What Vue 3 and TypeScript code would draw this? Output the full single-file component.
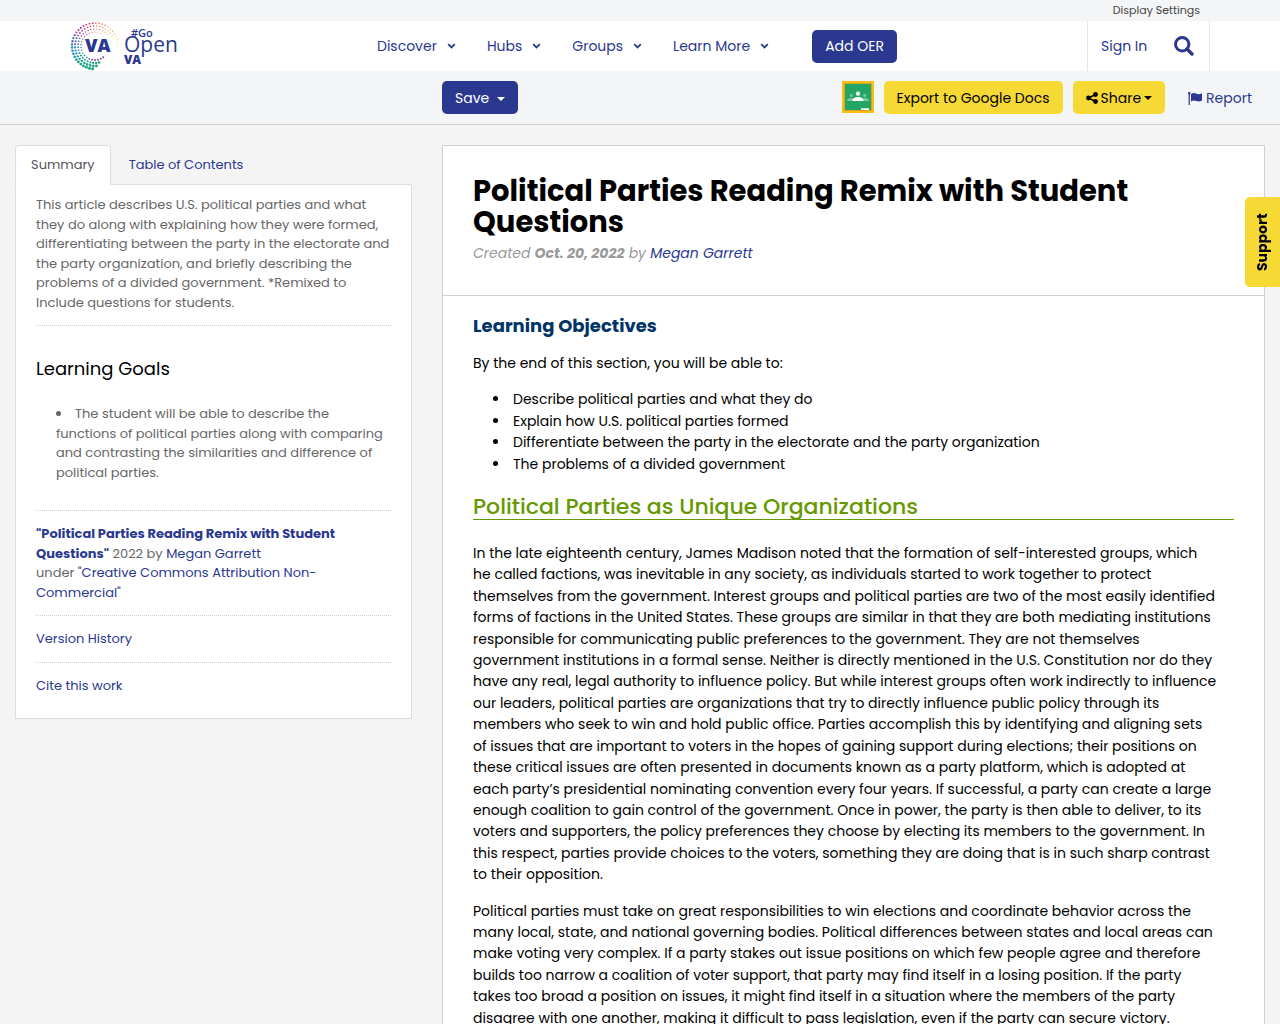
<script setup lang="ts">
interface Dot { x: number; y: number; r: number; fill: string }

const menus: string[] = ['Discover', 'Hubs', 'Groups', 'Learn More']

const summary = `This article describes U.S. political parties and what
they do along with explaining how they were formed,
differentiating between the party in the electorate and
the party organization, and briefly describing the
problems of a divided government. *Remixed to
Include questions for students.`

const goal = `The student will be able to describe the
functions of political parties along with comparing
and contrasting the similarities and difference of
political parties.`

const objectives: string[] = [
  'Describe political parties and what they do',
  'Explain how U.S. political parties formed',
  'Differentiate between the party in the electorate and the party organization',
  'The problems of a divided government',
]

const paragraphs: string[] = [
  `In the late eighteenth century, James Madison noted that the formation of self-interested groups, which
he called factions, was inevitable in any society, as individuals started to work together to protect
themselves from the government. Interest groups and political parties are two of the most easily identified
forms of factions in the United States. These groups are similar in that they are both mediating institutions
responsible for communicating public preferences to the government. They are not themselves
government institutions in a formal sense. Neither is directly mentioned in the U.S. Constitution nor do they
have any real, legal authority to influence policy. But while interest groups often work indirectly to influence
our leaders, political parties are organizations that try to directly influence public policy through its
members who seek to win and hold public office. Parties accomplish this by identifying and aligning sets
of issues that are important to voters in the hopes of gaining support during elections; their positions on
these critical issues are often presented in documents known as a party platform, which is adopted at
each party’s presidential nominating convention every four years. If successful, a party can create a large
enough coalition to gain control of the government. Once in power, the party is then able to deliver, to its
voters and supporters, the policy preferences they choose by electing its members to the government. In
this respect, parties provide choices to the voters, something they are doing that is in such sharp contrast
to their opposition.`,
  `Political parties must take on great responsibilities to win elections and coordinate behavior across the
many local, state, and national governing bodies. Political differences between states and local areas can
make voting very complex. If a party stakes out issue positions on which few people agree and therefore
builds too narrow a coalition of voter support, that party may find itself in a losing position. If the party
takes too broad a position on issues, it might find itself in a situation where the members of the party
disagree with one another, making it difficult to pass legislation, even if the party can secure victory.`,
]

const palette: string[] = ['#f6d23c', '#f3a83b', '#ea6a4a', '#d83a6c', '#a0409a', '#4f6bb0', '#2f90b8', '#22a39a', '#22a884', '#1f9f78']

// Four rings of dots, sweeping counter-clockwise from the right edge to the foot.
function ringDots(): Dot[] {
  const dots: Dot[] = []
  const rings = [
    { radius: 23, end: 270, step: 8 },
    { radius: 20, end: 280, step: 9 },
    { radius: 17, end: 292, step: 10 },
    { radius: 14, end: 308, step: 12 },
  ]
  rings.forEach((ring, i) => {
    for (let a = i * 22; a <= ring.end; a += ring.step) {
      const t = a / 300
      const rad = (a * Math.PI) / 180
      dots.push({
        x: 25 + ring.radius * Math.cos(rad),
        y: 25 - ring.radius * Math.sin(rad),
        r: (0.5 + t * 1.2) * (1 - i * 0.13),
        fill: i === 3 && a > 240 ? '#7a4a9c' : palette[Math.min(9, Math.floor(t * 10))],
      })
    }
  })
  return dots
}
const dots = ringDots()
</script>

<template>
  <div class="page">
    <div class="settings"><a href="#">Display Settings</a></div>

    <header class="header">
      <a class="logo" href="#" aria-label="Go Open VA">
        <svg width="108" height="50" viewBox="0 0 108 50">
          <circle v-for="(d, i) in dots" :key="i" :cx="d.x" :cy="d.y" :r="d.r" :fill="d.fill" />
          <text x="15" y="31" class="mark">VA</text>
          <text x="61" y="16" class="go">#Go</text>
          <text x="54" y="31" class="open">Open</text>
          <text x="54" y="43" class="state">VA</text>
        </svg>
      </a>
      <nav class="nav">
        <a v-for="m in menus" :key="m" href="#">{{ m }}
          <svg width="9" height="6" viewBox="0 0 9 6"><path d="M1.200 1.200 4.500 4.500 7.800 1.200" fill="none" stroke="currentColor" stroke-width="1.800" /></svg>
        </a>
        <button class="btn navy" type="button">Add OER</button>
      </nav>
      <div class="account">
        <a href="#">Sign In</a>
        <button class="search" type="button" aria-label="Search">
          <svg width="20" height="20" viewBox="0 0 20 20" fill="none" stroke="currentColor"><circle cx="8.2" cy="8.2" r="6.7" stroke-width="3" /><path d="m13 13 5 5" stroke-width="3.4" stroke-linecap="round" /></svg>
        </button>
      </div>
    </header>

    <div class="toolbar">
      <button class="btn navy save" type="button">Save <i class="caret"></i></button>
      <div class="actions">
        <a href="#" class="classroom" aria-label="Google Classroom">
          <svg width="32" height="32" viewBox="0 0 32 32">
            <path fill="#fbbc14" d="M0 0h32v32H0z" /><path fill="#d9a520" d="M2 2h28v28H2z" /><path fill="#23a566" d="M3 3h26v26H3z" />
            <g fill="#7bc8a2"><circle cx="9.3" cy="14.5" r="1.5" /><circle cx="22.7" cy="14.5" r="1.5" /><path d="M5 20c0-2 2-3 4.500-3s4.500 1 4.500 3zM18 20c0-2 2-3 4.500-3s4.500 1 4.500 3z" /></g>
            <g fill="#fff"><circle cx="16" cy="12.700" r="2.100" /><path d="M10.500 20c0-2.700 2.500-4 5.500-4s5.500 1.300 5.500 4zM19 27.200h8V29h-8z" /></g>
          </svg>
        </a>
        <button class="btn yellow" type="button">Export to Google Docs</button>
        <button class="btn yellow share" type="button">
          <svg width="12" height="12" viewBox="0 0 12 12"><path d="M9.500 2.500 2.500 6l7 3.500" fill="none" stroke="currentColor" stroke-width="1.500" /><circle cx="9.500" cy="2.500" r="2.400" /><circle cx="2.500" cy="6" r="2.400" /><circle cx="9.500" cy="9.500" r="2.400" /></svg>
          Share <i class="caret"></i>
        </button>
        <a class="report" href="#">
          <svg width="15" height="13" viewBox="0 0 15 13" fill="currentColor"><path d="M.6.5h1.200V13H.6zM3 2.200C5 .8 6.500.8 8.500 1.800c2 .9 3.500.4 5.500-.6v7.300c-2 1-3.500 1.500-5.500.6C6.500 8.200 5 8.200 3 9.500z" /><circle cx="1.200" cy="1.200" r="1.200" /></svg>
          Report</a>
      </div>
    </div>

    <div class="columns">
      <aside class="side">
        <div class="tabs">
          <a class="tab active" href="#">Summary</a>
          <a class="tab" href="#">Table of Contents</a>
        </div>
        <div class="panel">
          <p class="lines block">{{ summary }}</p>
          <section class="block goals">
            <h2>Learning Goals</h2>
            <ul><li class="lines">{{ goal }}</li></ul>
          </section>
          <p class="block"><a href="#"><b>"Political Parties Reading Remix with Student<br>Questions"</b></a> 2022 by <a href="#">Megan Garrett</a><br>under <a href="#">"Creative Commons Attribution Non-<br>Commercial"</a></p>
          <p class="block"><a href="#">Version History</a></p>
          <p class="block"><a href="#">Cite this work</a></p>
        </div>
      </aside>

      <main class="article">
        <div class="title">
          <h1>Political Parties Reading Remix with Student<br>Questions</h1>
          <p>Created <b>Oct. 20, 2022</b> by <a href="#">Megan Garrett</a></p>
        </div>
        <div class="content">
          <h3>Learning Objectives</h3>
          <p>By the end of this section, you will be able to:</p>
          <ul><li v-for="o in objectives" :key="o">{{ o }}</li></ul>
          <h2>Political Parties as Unique Organizations</h2>
          <p v-for="(p, i) in paragraphs" :key="i" class="lines">{{ p }}</p>
        </div>
      </main>
    </div>

    <button class="support" type="button">Support</button>
  </div>
</template>

<style>
body { background: #f4f4f4; }
</style>

<style scoped>
.page { height: 100vh; overflow: hidden; font-family: Poppins, Inter, sans-serif; font-size: 14px; color: #000; }
.page * { box-sizing: border-box; }
a { color: #2b388f; text-decoration: none; }
button { font: inherit; border: 0; cursor: pointer; }
h1, h2, h3, p, ul { margin: 0; padding: 0; }
.lines { white-space: pre-line; }
.settings { display: flex; justify-content: flex-end; padding-right: 80px; background: #f4f5f7; font-size: 11px; line-height: 21px; }
.settings a { color: #444; }
.header { display: flex; align-items: center; height: 50px; padding: 0 70px; background: #fff; }
.logo { width: 307px; height: 50px; }
.logo text { fill: #2b388f; font-family: "Open Sans", sans-serif; }
.logo .mark { font-size: 18px; font-weight: 800; letter-spacing: normal; }
.logo .go { font-size: 11px; font-weight: 600; }
.logo .open { font-size: 21px; font-weight: 500; }
.logo .state { font-size: 12px; font-weight: 800; }
.nav { display: flex; align-items: center; gap: 31px; }
.nav a { display: flex; align-items: center; gap: 10px; }
.nav .btn { margin-left: 12px; }
.btn { height: 33px; padding: 0 13px; border-radius: 5px; white-space: nowrap; }
.navy { background: #2b388f; color: #fff; }
.yellow { background: #f6d935; color: #000; }
.account { display: flex; align-items: center; justify-content: space-between; width: 123px; height: 50px; margin-left: auto; padding: 0 15px 0 13px; border: solid #e7e7e7; border-width: 0 1px; }
.search { display: flex; padding: 0; background: none; color: #2b388f; }
.toolbar { display: flex; align-items: flex-start; justify-content: space-between; height: 54px; padding: 10px 28px 0 442px; background: #f4f5f7; border-bottom: 1px solid #d0d0d0; }
.toolbar .btn, .report { line-height: 34px; }
.caret { display: inline-block; margin-left: 4px; border: 4px solid transparent; border-top-color: currentColor; border-bottom: 0; vertical-align: 2px; }
.actions { display: flex; align-items: flex-start; gap: 10px; }
.classroom { display: flex; }
.share { display: flex; align-items: center; gap: 3px; }
.share .caret { margin: 0; }
.report { display: flex; align-items: center; gap: 3px; margin-left: 13px; }
.columns { display: flex; align-items: flex-start; gap: 30px; padding: 20px 15px 0; }
.side { flex: 0 0 397px; font-size: 13px; line-height: 1.5; color: #666; }
.tabs { display: flex; margin-bottom: -1px; }
.tab { height: 40px; padding: 0 15px; border: 1px solid transparent; line-height: 38px; margin-right: 2px; }
.tab.active { position: relative; color: #555; background: #fff; border-color: #ddd; border-bottom-color: #fff; border-radius: 4px 4px 0 0; }
.panel { padding: 10px 20px 10px; background: #fff; border: 1px solid #ddd; }
.block { padding-bottom: 13px; margin-bottom: 13px; border-bottom: 1px dotted #ccc; }
.block:last-child { border: 0; margin: 0; }
.goals { padding: 17px 0 28px; }
.goals h2 { margin-bottom: 23px; font-size: 18px; line-height: 25px; font-weight: 400; color: #000; }
.goals ul { padding-left: 20px; list-style-position: inside; }
.article { flex: 1; min-width: 0; background: #fff; border: 1px solid #d0d0d0; }
.title { padding: 30px; height: 150px; border-bottom: 1px solid #d0d0d0; }
.title h1 { font-size: 29px; line-height: 31px; font-weight: 700; white-space: nowrap; }
.title p { margin-top: 4px; line-height: 22px; font-style: italic; color: #999; }
.content { padding: 19px 30px; line-height: 1.53; }
.content p, .content ul { margin-bottom: 15px; }
.content ul { padding-left: 20px; list-style-position: inside; }
.content h3 { margin-bottom: 16px; font-size: 18px; line-height: 22px; font-weight: 700; color: #036; }
.content h2 { margin: 19px 0 23px; border-bottom: 1px solid #690; font-size: 22px; line-height: 25px; font-weight: 500; color: #690; }
.support { position: fixed; top: 197px; right: 0; width: 35px; height: 90px; padding: 0; background: #f6d935; font-weight: 700; writing-mode: vertical-rl; transform: rotate(180deg); border-radius: 0 5px 5px 0; }
</style>
